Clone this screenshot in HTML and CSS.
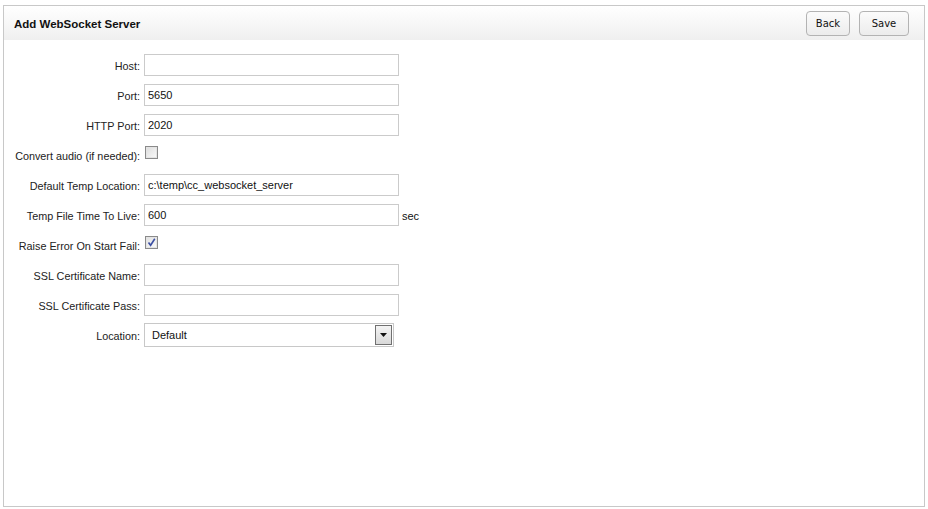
FILE: index.html
```html
<!DOCTYPE html>
<html>
<head>
<meta charset="utf-8">
<link rel="stylesheet" href="styles.css">
</head>
<body>
<div class="panel">
  <div class="header">
    <div class="title">Add WebSocket Server</div>
    <div class="actions">
      <button class="btn btn-back">Back</button>
      <button class="btn btn-save">Save</button>
    </div>
  </div>
  <div class="form">
    <div class="row"><label class="lbl">Host:</label><input class="txt" type="text" value=""></div>
    <div class="row"><label class="lbl">Port:</label><input class="txt" type="text" value="5650"></div>
    <div class="row"><label class="lbl">HTTP Port:</label><input class="txt" type="text" value="2020"></div>
    <div class="row"><label class="lbl">Convert audio (if needed):</label><span class="chk"></span></div>
    <div class="row"><label class="lbl">Default Temp Location:</label><input class="txt" type="text" value="c:\temp\cc_websocket_server"></div>
    <div class="row"><label class="lbl">Temp File Time To Live:</label><input class="txt" type="text" value="600"><span class="unit">sec</span></div>
    <div class="row"><label class="lbl">Raise Error On Start Fail:</label><span class="chk checked"><svg viewBox="0 0 11 11" width="11" height="11"><path d="M2.5 5.5 L4.6 8.3 L8.8 1.8" fill="none" stroke="#3c4fa3" stroke-width="1.6"/></svg></span></div>
    <div class="row"><label class="lbl">SSL Certificate Name:</label><input class="txt" type="text" value=""></div>
    <div class="row"><label class="lbl">SSL Certificate Pass:</label><input class="txt" type="text" value=""></div>
    <div class="row"><label class="lbl">Location:</label>
      <div class="select"><span class="sel-val">Default</span><span class="sel-arrow"><svg viewBox="0 0 7 4" width="7" height="4"><path d="M0 0 H7 L3.5 4 Z" fill="#111"/></svg></span></div>
    </div>
  </div>
</div>
</body>
</html>
```
FILE: styles.css
```css
html, body {
  margin: 0;
  padding: 0;
  background: #fff;
}
body {
  font-family: "Liberation Sans", Arial, sans-serif;
  font-size: 11px;
  color: #222;
}
.panel {
  margin: 5px 0 0 3px;
  width: 920px;
  height: 500px;
  border: 1px solid #c8c8c8;
  box-sizing: content-box;
}
.header {
  height: 34px;
  display: flex;
  align-items: center;
  justify-content: space-between;
  padding: 0 15px 0 10px;
  background: linear-gradient(#ffffff, #efefef);
}
.title {
  font-weight: bold;
  font-size: 11.5px;
  color: #111;
  padding-top: 1px;
}
.actions {
  display: flex;
  gap: 9px;
  padding-top: 1px;
}
.btn {
  font-family: "DejaVu Sans", Verdana, sans-serif;
  font-size: 10px;
  color: #111;
  height: 25px;
  border: 1px solid #b3b3b3;
  border-radius: 4px;
  background: linear-gradient(#fbfbfb, #ececec);
  padding: 0;
  margin: 0;
}
.btn-back { width: 44px; }
.btn-save { width: 50px; }
.form {
  padding-top: 10px;
  display: flex;
  flex-direction: column;
}
.row {
  height: 30px;
  display: flex;
  align-items: center;
}
.lbl {
  width: 136px;
  text-align: right;
  padding-right: 4px;
  font-size: 10.8px;
  color: #222;
  padding-top: 1px;
}
.txt {
  box-sizing: border-box;
  width: 255px;
  height: 22px;
  margin: 0;
  border: 1px solid #cbcbcb;
  padding: 0 3px;
  font-family: "Liberation Sans", Arial, sans-serif;
  font-size: 11px;
  color: #111;
  outline: none;
}
.unit {
  margin-left: 3px;
  font-size: 11px;
  color: #111;
  padding-top: 1px;
}
.chk {
  box-sizing: border-box;
  width: 13px;
  height: 13px;
  margin-left: 1px;
  margin-top: -5px;
  border: 1px solid #8a8a8a;
  background: linear-gradient(135deg, #dcdcdc, #fbfbfb);
  box-shadow: inset 0 0 0 1px #e4e4e4;
  display: flex;
  align-items: center;
  justify-content: center;
}
.chk.checked {
  background: linear-gradient(135deg, #e0e0e0, #fbfbfb);
}
.select {
  box-sizing: border-box;
  width: 250px;
  height: 24px;
  border: 1px solid #c8c8c8;
  display: flex;
  align-items: center;
  justify-content: space-between;
  padding: 0 1px 0 7px;
  font-size: 11px;
  color: #111;
  margin-top: -1px;
}
.sel-arrow {
  box-sizing: border-box;
  width: 17px;
  height: 20px;
  border: 1px solid #707070;
  background: linear-gradient(#f4f4f4, #d8d8d8);
  display: flex;
  align-items: center;
  justify-content: center;
}
```
